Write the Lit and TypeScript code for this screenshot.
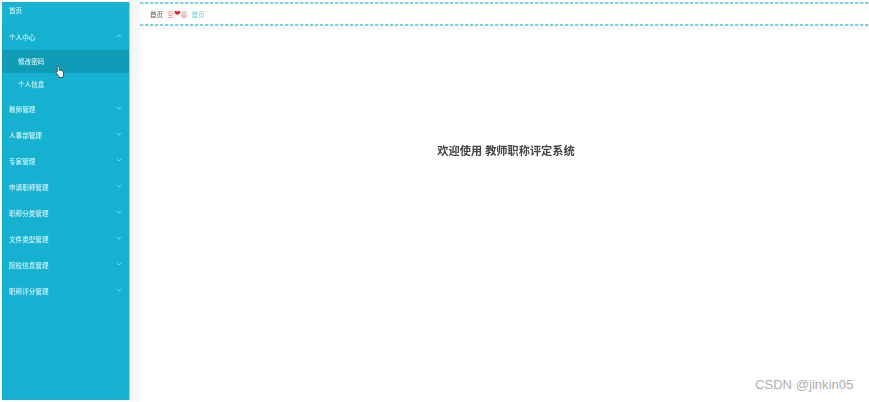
import { LitElement, html, css, svg } from "lit";
import { customElement } from "lit/decorators.js";

const chevron = (up: boolean) => html`<svg class="chev" viewBox="0 0 8 5" width="6" height="4">
  <path d=${up ? "M1 4 L4 1 L7 4" : "M1 1 L4 4 L7 1"} fill="none" stroke="#a9e3ee" stroke-width="1"/></svg>`;

const menus = ["教师管理", "人事部管理", "专家管理", "申请职称管理", "职称分类管理", "文件类型管理", "院校信息管理", "职称评分管理"];

const hand = svg`<path d="M3.2 1.2c.7 0 1 .5 1 1.1v3.1l.4-.1c.5-.3 1.1 0 1.2.4.5-.3 1.1-.1 1.3.4.5-.2 1.1 0 1.3.6l.2 2.3c.1 1.1-.3 1.9-.8 2.6v.9H3.8v-1L1.3 7.7c-.4-.6.2-1.3.9-1l.1.1V2.3c0-.6.3-1.100.9-1.100z" fill="#fff" stroke="#333" stroke-width=".8" stroke-linejoin="round"/>`;

@customElement("app-root")
export class AppRoot extends LitElement {
  static styles = css`
    :host { display: block; width: 869px; height: 402px; background: #fff; position: relative; overflow: hidden;
      font-family: "Liberation Sans", "Noto Sans CJK SC", sans-serif; }
    .page { display: flex; height: 402px; box-sizing: border-box; padding: 2px 0 2px 2px; }
    .side { width: 127px; flex: none; background: #14b2d0; border-right: 1px solid #8fdbe9; display: flex; flex-direction: column; position: relative; color: #d9f3f8; font-size: 6.6px; }
    .row { height: 26px; display: flex; align-items: center; justify-content: space-between; padding: 0 7px 0 7px; box-sizing: border-box; }
    .label { filter: blur(.35px); font-weight: 500; }
    .home { height: 21px; background: #16b4d2; padding-bottom: 5px; }
    .open { padding-top: 2px; }
    .sub { height: 23px; padding-left: 16px; padding-bottom: 2px; }
    .active { background: #0f9ab5; border-top: 1px solid #0d93ad; height: 23px; margin-top: 1px; }
    .chev { display: block; margin-top: -2px; filter: blur(.2px); }
    .gap { width: 10px; flex: none; background: #f6f8fa; margin-top: -2px; margin-bottom: -2px; }
    .main { flex: 1; margin-top: -2px; display: flex; flex-direction: column; min-width: 0; }
    .dash { height: 2px; flex: none; background: repeating-linear-gradient(90deg, #7ed3df 0 3px, #c5ebf0 3px 4px, #fff 4px 5px); }
    .first { margin-top: 2px; }
    .crumb { height: 20px; flex: none; display: flex; align-items: center; gap: 4px; padding: 0 0 1px 10px; box-sizing: border-box; font-size: 6.6px; color: #555; filter: blur(.3px); }
    .red { color: #f47a7a; display: flex; align-items: center; }
    .heart { color: #e8202a; font-size: 8px; line-height: 1; margin-top: 1px; }
    .teal { color: #6ccbd9; }
    .strip { height: 4px; flex: none; background: #f6f8fa; }
    .content { flex: 1; display: flex; justify-content: center; padding: 113px 0 0 3px; }
    .title { font-size: 11.2px; font-weight: 700; color: #444; line-height: 16px; height: 16px; filter: blur(.35px); }
    .cursor { position: absolute; left: 53px; top: 63px; }
    .mark { position: absolute; left: 755px; top: 377px; font-size: 13px; letter-spacing: .05px; line-height: 16px; color: #adadad; white-space: nowrap; }
  `;

  render() {
    return html`
      <div class="page">
        <nav class="side">
          <div class="row home"><span class="label">首页</span></div>
          <div class="row open"><span class="label">个人中心</span>${chevron(true)}</div>
          <div class="row sub active"><span class="label">修改密码</span></div>
          <div class="row sub"><span class="label">个人信息</span></div>
          ${menus.map((m) => html`<div class="row"><span class="label">${m}</span>${chevron(false)}</div>`)}
          <svg class="cursor" width="11" height="14" viewBox="0 0 11 14">${hand}</svg>
        </nav>
        <div class="gap"></div>
        <main class="main">
          <div class="dash first"></div>
          <div class="crumb"><span>首页</span><span class="red">至<span class="heart">❤</span>善</span><span class="teal">首页</span></div>
          <div class="dash"></div>
          <div class="strip"></div>
          <div class="content"><div class="title">欢迎使用 教师职称评定系统</div></div>
        </main>
      </div>
      <div class="mark">CSDN @jinkin05</div>
    `;
  }
}
